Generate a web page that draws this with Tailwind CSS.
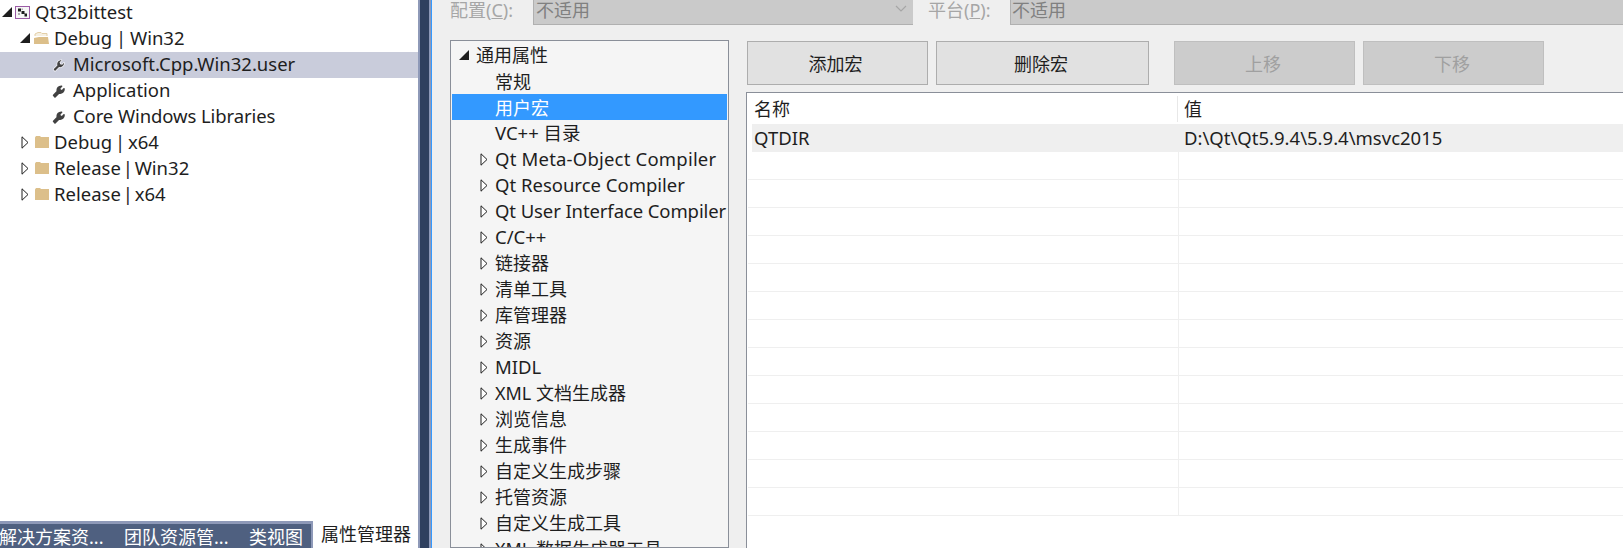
<!DOCTYPE html>
<html lang="en">
<head>
  <meta charset="UTF-8">
  <title>属性管理器</title>
  <script src="https://cdn.jsdelivr.net/npm/@tailwindcss/browser@4"></script>
</head>
<body class="bg-white">
  <svg class="hidden">
    <symbol id="tri-open" viewBox="0 0 8 13"><path d="M1 0.8 L7 6.5 L1 12.2 Z" fill="#fff" stroke="#1e1e1e" stroke-width="1"/></symbol>
    <symbol id="tri-down" viewBox="0 0 10 10"><path d="M0 10 L10 10 L10 0 Z" fill="#1e1e1e"/></symbol>
    <symbol id="folder" viewBox="0 0 14 12"><path d="M0 1.5 L0 12 L14 12 L14 1 L6 1 L5 0 L1 0 Z" fill="#dcbf8a"/></symbol>
    <symbol id="folder-open" viewBox="0 0 15 12"><path d="M1 4 L1 2 L4 0.5 L7 0.5 L8 1.5 L13 1.5 L13 4" fill="#f6f0e2" stroke="#e3cfa8"/><path d="M0 12 L0 6 L5 5 L14 5 L15 12 Z" fill="#dcbf8a"/></symbol>
    <symbol id="wrench" viewBox="0 0 13 13"><path d="M1.6 10.2 L5.4 6.4 C4.6 3.2 6.8 1 9.6 1.2 L7.6 3.2 L8.2 5.2 L10.2 5.7 L12 3.8 C12.2 6.6 10 8.7 7 8 L3 12 Z" fill="#424242" stroke="#424242" stroke-width="1.6" stroke-linejoin="round"/></symbol>
    <symbol id="wrench-sel" viewBox="0 0 13 13"><path d="M1.6 10.2 L5.4 6.4 C4.6 3.2 6.8 1 9.6 1.2 L7.6 3.2 L8.2 5.2 L10.2 5.7 L12 3.8 C12.2 6.6 10 8.7 7 8 L3 12 Z" fill="#424242" stroke="#f4f4f8" stroke-width="1.4" stroke-linejoin="round" paint-order="stroke"/></symbol>
    <symbol id="project" viewBox="0 0 15 13"><rect x="0.5" y="0.5" width="14" height="12" fill="#f6f6f6" stroke="#9b5ba5"/><path d="M3 2.5 H6 V5.5 H3 Z M6.5 5 H9.5 V8 H6.5 Z M9.5 7.5 H12 V10.5 H9.5 Z" fill="#1e1e1e"/><path d="M6.5 2.5 H8 V4 H6.5 Z M3 7 H5 V9 H3 Z" fill="#b0b0b0"/></symbol>
  </svg>

  <div class="flex w-[1623px] h-[548px] overflow-hidden text-[18px] leading-[26px] text-[#1e1e1e] font-['Noto_Sans','Noto_Sans_CJK_SC',sans-serif]">

    <!-- left panel -->
    <aside class="w-[418px] shrink-0 flex flex-col justify-between">
      <ul class="text-[18.5px]">
        <li class="h-[26px] flex items-center pl-[2px] pb-[2px]">
          <svg class="w-[10px] h-[10px]"><use href="#tri-down"/></svg>
          <svg class="w-[15px] h-[13px] ml-[3px]"><use href="#project"/></svg>
          <span class="ml-[5px]">Qt32bittest</span>
        </li>
        <li class="h-[26px] flex items-center pl-[20px] pb-[2px]">
          <svg class="w-[10px] h-[10px]"><use href="#tri-down"/></svg>
          <svg class="w-[15px] h-[12px] ml-[4px]"><use href="#folder-open"/></svg>
          <span class="ml-[5px] [word-spacing:-1px]">Debug | Win32</span>
        </li>
        <li class="h-[26px] flex items-center pl-[52px] pb-[2px] bg-[#c9ccdb]">
          <svg class="w-[13px] h-[13px] mt-[2px]"><use href="#wrench-sel"/></svg>
          <span class="ml-[8px]">Microsoft.Cpp.Win32.user</span>
        </li>
        <li class="h-[26px] flex items-center pl-[52px] pb-[2px]">
          <svg class="w-[13px] h-[13px] mt-[2px]"><use href="#wrench"/></svg>
          <span class="ml-[8px]">Application</span>
        </li>
        <li class="h-[26px] flex items-center pl-[52px] pb-[2px]">
          <svg class="w-[13px] h-[13px] mt-[2px]"><use href="#wrench"/></svg>
          <span class="ml-[8px] tracking-[-0.1px]">Core Windows Libraries</span>
        </li>
        <li class="h-[26px] flex items-center pl-[21px] pb-[2px]">
          <svg class="w-[8px] h-[13px]"><use href="#tri-open"/></svg>
          <svg class="w-[14px] h-[12px] ml-[6px]"><use href="#folder"/></svg>
          <span class="ml-[5px] [word-spacing:-2px]">Debug | x64</span>
        </li>
        <li class="h-[26px] flex items-center pl-[21px] pb-[2px]">
          <svg class="w-[8px] h-[13px]"><use href="#tri-open"/></svg>
          <svg class="w-[14px] h-[12px] ml-[6px]"><use href="#folder"/></svg>
          <span class="ml-[5px] [word-spacing:-3px]">Release | Win32</span>
        </li>
        <li class="h-[26px] flex items-center pl-[21px] pb-[2px]">
          <svg class="w-[8px] h-[13px]"><use href="#tri-open"/></svg>
          <svg class="w-[14px] h-[12px] ml-[6px]"><use href="#folder"/></svg>
          <span class="ml-[5px] [word-spacing:-3px]">Release | x64</span>
        </li>
      </ul>
      <div class="flex h-[27px]">
        <div class="w-[313px] flex border-t-[3px] border-r-[2px] border-[#8e99b8] bg-[#4f6080] text-white overflow-hidden whitespace-nowrap">
          <span class="w-[124px] shrink-0 -ml-[1px]">解决方案资...</span>
          <span class="w-[126px] shrink-0 pl-[1px]">团队资源管...</span>
          <span>类视图</span>
        </div>
        <div class="pl-[8px] whitespace-nowrap">属性管理器</div>
      </div>
    </aside>

    <!-- splitter -->
    <div class="w-[14px] shrink-0 flex">
      <div class="w-[2px] bg-[#8e99b8]"></div>
      <div class="w-[9px] bg-[#2f405f]"></div>
      <div class="w-[2px] bg-[#8e99b8]"></div>
      <div class="w-[1px] bg-[#3399ff]"></div>
    </div>

    <!-- dialog -->
    <div class="flex-1 min-w-0 bg-[#efefef] pl-[18px] flex flex-col">
      <div class="h-[25px] shrink-0 flex text-[#a6a6a6] leading-[20px]">
        <span class="w-[83px]">配置(<u>C</u>):</span>
        <div class="w-[380px] flex justify-between bg-[#cacaca] border-l border-b border-[#b0b0b0] pl-[2px] pr-[6px] text-[#808080]">
          <span>不适用</span>
          <svg class="w-[12px] h-[8px] mt-[5px]" viewBox="0 0 12 8"><path d="M1 1 L6 6 L11 1" fill="none" stroke="#a6a6a6" stroke-width="1.2"/></svg>
        </div>
        <span class="w-[97px] pl-[15px]">平台(<u>P</u>):</span>
        <div class="flex-1 bg-[#cacaca] border-l border-b border-[#b0b0b0] pl-[1px] text-[#808080]">不适用</div>
      </div>

      <div class="flex-1 min-h-0 flex mt-[15px]">
        <!-- property tree -->
        <ul class="w-[279px] shrink-0 border border-[#8a8f99] bg-[#f5f5f5] p-[1px] overflow-hidden">
          <li class="h-[26px] flex items-center pl-[7px]"><svg class="w-[10px] h-[10px] mr-[7px]"><use href="#tri-down"/></svg>通用属性</li>
          <li class="h-[26px] flex items-center pl-[43px] pt-[2px]">常规</li>
          <li class="h-[26px] flex items-center pl-[43px] pt-[2px] bg-[#3399ff] text-white">用户宏</li>
          <li class="h-[26px] flex items-center pl-[43px] text-[18.5px]">VC++ 目录</li>
          <li class="h-[26px] flex items-center pl-[28px] whitespace-nowrap text-[18.5px] tracking-[0.2px]"><svg class="w-[8px] h-[13px] mr-[7px] shrink-0"><use href="#tri-open"/></svg>Qt Meta-Object Compiler</li>
          <li class="h-[26px] flex items-center pl-[28px] whitespace-nowrap text-[18.5px]"><svg class="w-[8px] h-[13px] mr-[7px] shrink-0"><use href="#tri-open"/></svg>Qt Resource Compiler</li>
          <li class="h-[26px] flex items-center pl-[28px] whitespace-nowrap text-[18.5px] tracking-[-0.1px]"><svg class="w-[8px] h-[13px] mr-[7px] shrink-0"><use href="#tri-open"/></svg>Qt User Interface Compiler</li>
          <li class="h-[26px] flex items-center pl-[28px] text-[18.5px]"><svg class="w-[8px] h-[13px] mr-[7px] shrink-0"><use href="#tri-open"/></svg>C/C++</li>
          <li class="h-[26px] flex items-center pl-[28px]"><svg class="w-[8px] h-[13px] mr-[7px] shrink-0"><use href="#tri-open"/></svg>链接器</li>
          <li class="h-[26px] flex items-center pl-[28px]"><svg class="w-[8px] h-[13px] mr-[7px] shrink-0"><use href="#tri-open"/></svg>清单工具</li>
          <li class="h-[26px] flex items-center pl-[28px]"><svg class="w-[8px] h-[13px] mr-[7px] shrink-0"><use href="#tri-open"/></svg>库管理器</li>
          <li class="h-[26px] flex items-center pl-[28px]"><svg class="w-[8px] h-[13px] mr-[7px] shrink-0"><use href="#tri-open"/></svg>资源</li>
          <li class="h-[26px] flex items-center pl-[28px] text-[18.5px]"><svg class="w-[8px] h-[13px] mr-[7px] shrink-0"><use href="#tri-open"/></svg>MIDL</li>
          <li class="h-[26px] flex items-center pl-[28px]"><svg class="w-[8px] h-[13px] mr-[7px] shrink-0"><use href="#tri-open"/></svg>XML 文档生成器</li>
          <li class="h-[26px] flex items-center pl-[28px]"><svg class="w-[8px] h-[13px] mr-[7px] shrink-0"><use href="#tri-open"/></svg>浏览信息</li>
          <li class="h-[26px] flex items-center pl-[28px]"><svg class="w-[8px] h-[13px] mr-[7px] shrink-0"><use href="#tri-open"/></svg>生成事件</li>
          <li class="h-[26px] flex items-center pl-[28px]"><svg class="w-[8px] h-[13px] mr-[7px] shrink-0"><use href="#tri-open"/></svg>自定义生成步骤</li>
          <li class="h-[26px] flex items-center pl-[28px]"><svg class="w-[8px] h-[13px] mr-[7px] shrink-0"><use href="#tri-open"/></svg>托管资源</li>
          <li class="h-[26px] flex items-center pl-[28px]"><svg class="w-[8px] h-[13px] mr-[7px] shrink-0"><use href="#tri-open"/></svg>自定义生成工具</li>
          <li class="h-[26px] flex items-center pl-[28px] whitespace-nowrap"><svg class="w-[8px] h-[13px] mr-[7px] shrink-0"><use href="#tri-open"/></svg>XML 数据生成器工具</li>
        </ul>

        <!-- macros -->
        <div class="flex-1 min-w-0 pl-[17px] flex flex-col">
          <div class="h-[44px] mt-[1px] shrink-0 flex pl-[1px]">
            <button class="w-[181px] pr-[4px] pt-[1px] border border-[#adadad] bg-[#e1e1e1]">添加宏</button>
            <button class="w-[213px] ml-[8px] pr-[3px] pt-[1px] border border-[#adadad] bg-[#e1e1e1]">删除宏</button>
            <button class="w-[181px] ml-[25px] pr-[3px] pt-[1px] border border-[#bfbfbf] bg-[#cccccc] text-[#a0a0a0]">上移</button>
            <button class="w-[181px] ml-[8px] pr-[3px] pt-[1px] border border-[#bfbfbf] bg-[#cccccc] text-[#a0a0a0]">下移</button>
          </div>
          <div class="flex-1 mt-[7px] border-l border-t border-[#8a8f99] bg-white">
            <div class="h-[31px] flex items-center">
              <span class="w-[431px] pl-[7px] border-r border-[#e8e8e8]">名称</span>
              <span class="pl-[6px]">值</span>
            </div>
            <div class="h-[28px] flex items-center ml-[5px] bg-[#efefef] text-[18.5px]">
              <span class="w-[432px] pl-[2px]">QTDIR</span>
              <span>D:\Qt\Qt5.9.4\5.9.4\msvc2015</span>
            </div>
            <div class="h-[28px] flex border-b border-[#efefef] ml-[1px]"><div class="w-[431px] border-r border-[#efefef]"></div></div>
            <div class="h-[28px] flex border-b border-[#efefef] ml-[1px]"><div class="w-[431px] border-r border-[#efefef]"></div></div>
            <div class="h-[28px] flex border-b border-[#efefef] ml-[1px]"><div class="w-[431px] border-r border-[#efefef]"></div></div>
            <div class="h-[28px] flex border-b border-[#efefef] ml-[1px]"><div class="w-[431px] border-r border-[#efefef]"></div></div>
            <div class="h-[28px] flex border-b border-[#efefef] ml-[1px]"><div class="w-[431px] border-r border-[#efefef]"></div></div>
            <div class="h-[28px] flex border-b border-[#efefef] ml-[1px]"><div class="w-[431px] border-r border-[#efefef]"></div></div>
            <div class="h-[28px] flex border-b border-[#efefef] ml-[1px]"><div class="w-[431px] border-r border-[#efefef]"></div></div>
            <div class="h-[28px] flex border-b border-[#efefef] ml-[1px]"><div class="w-[431px] border-r border-[#efefef]"></div></div>
            <div class="h-[28px] flex border-b border-[#efefef] ml-[1px]"><div class="w-[431px] border-r border-[#efefef]"></div></div>
            <div class="h-[28px] flex border-b border-[#efefef] ml-[1px]"><div class="w-[431px] border-r border-[#efefef]"></div></div>
            <div class="h-[28px] flex border-b border-[#efefef] ml-[1px]"><div class="w-[431px] border-r border-[#efefef]"></div></div>
            <div class="h-[28px] flex border-b border-[#efefef] ml-[1px]"><div class="w-[431px] border-r border-[#efefef]"></div></div>
            <div class="h-[28px] flex border-b border-[#efefef] ml-[1px]"><div class="w-[431px] border-r border-[#efefef]"></div></div>
          </div>
        </div>
      </div>
    </div>
  </div>
</body>
</html>
